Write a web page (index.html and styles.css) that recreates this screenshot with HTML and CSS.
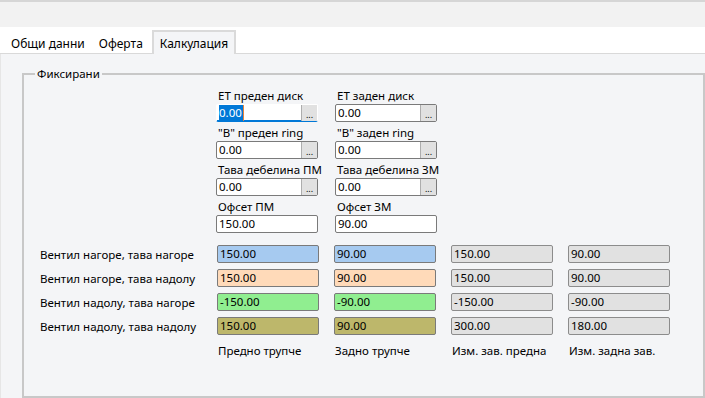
FILE: index.html
```html
<!DOCTYPE html>
<html lang="bg">
<head>
  <meta charset="UTF-8">
  <title>Калкулация</title>
  <link rel="stylesheet" href="styles.css">
</head>
<body>
  <div class="titlebar"></div>
  <div class="tabs">
    <span class="tab">Общи данни</span>
    <span class="tab">Оферта</span>
    <span class="tab active">Калкулация</span>
  </div>
  <div class="panel">
    <fieldset class="group">
      <legend>Фиксирани</legend>
      <div class="fixed">
        <div class="field">
          <label>ЕТ преден диск</label>
          <div class="edit focused"><span class="sel">0.00</span><span class="dots">...</span></div>
        </div>
        <div class="field">
          <label>ЕТ заден диск</label>
          <div class="edit"><span>0.00</span><span class="dots">...</span></div>
        </div>
        <div class="field">
          <label>"B" преден ring</label>
          <div class="edit"><span>0.00</span><span class="dots">...</span></div>
        </div>
        <div class="field">
          <label>"B" заден ring</label>
          <div class="edit"><span>0.00</span><span class="dots">...</span></div>
        </div>
        <div class="field">
          <label>Тава дебелина ПМ</label>
          <div class="edit"><span>0.00</span><span class="dots">...</span></div>
        </div>
        <div class="field">
          <label>Тава дебелина ЗМ</label>
          <div class="edit"><span>0.00</span><span class="dots">...</span></div>
        </div>
        <div class="field">
          <label>Офсет ПМ</label>
          <div class="edit"><span>150.00</span></div>
        </div>
        <div class="field">
          <label>Офсет ЗМ</label>
          <div class="edit"><span>90.00</span></div>
        </div>
      </div>

      <div class="matrix">
        <span class="row-label">Вентил нагоре, тава нагоре</span>
        <div class="edit blue">150.00</div>
        <div class="edit blue">90.00</div>
        <div class="edit ro">150.00</div>
        <div class="edit ro">90.00</div>

        <span class="row-label">Вентил нагоре, тава надолу</span>
        <div class="edit peach">150.00</div>
        <div class="edit peach">90.00</div>
        <div class="edit ro">150.00</div>
        <div class="edit ro">90.00</div>

        <span class="row-label">Вентил надолу, тава нагоре</span>
        <div class="edit green">-150.00</div>
        <div class="edit green">-90.00</div>
        <div class="edit ro">-150.00</div>
        <div class="edit ro">-90.00</div>

        <span class="row-label">Вентил надолу, тава надолу</span>
        <div class="edit khaki">150.00</div>
        <div class="edit khaki">90.00</div>
        <div class="edit ro">300.00</div>
        <div class="edit ro">180.00</div>

        <span></span>
        <span class="col-label">Предно трупче</span>
        <span class="col-label">Задно трупче</span>
        <span class="col-label">Изм. зав. предна</span>
        <span class="col-label">Изм. задна зав.</span>
      </div>
    </fieldset>
  </div>
</body>
</html>
```

FILE: styles.css
```css
* { box-sizing: border-box; }
html, body { height: 100%; }
body { margin: 0; font-family: "Noto Sans", "Open Sans", sans-serif; font-size: 12px; color: #000; background: #fff; display: flex; flex-direction: column; overflow: hidden; }

.titlebar { height: 27px; flex: none; background: #f2f2f2; border-top: 2px solid #d6d6d6; }

.tabs { height: 27px; flex: none; display: flex; align-items: flex-end; background: #fff; border-bottom: 1px solid #d9d9d9; padding-left: 4px; }
.tab { height: 21px; line-height: 17px; padding: 2px 7px 0; margin-bottom: -1px; }
.tab.active { height: 24px; line-height: 19px; padding: 2px 6px 0; margin-left: 2px; background: #f4f5f7; border: 2px solid #dadada; border-bottom: none; }

.panel { flex: 1; display: flex; background: #f4f5f7; border-left: 1px solid #e6e6e6; padding: 12px 0 0 21px; font-size: 11.5px; }

.group { flex: 1; margin: 0; padding: 0; border: 2px solid #c8c8c8; min-width: 0; }
.group legend { margin-left: 11px; padding: 0 2px; line-height: 15px; }

.fixed { display: grid; grid-template-columns: 102px 102px; column-gap: 17px; row-gap: 3px; padding-left: 192px; margin-top: 7px; }
.field label { display: block; line-height: 15px; margin-bottom: 1px; padding-left: 2px; white-space: nowrap; }

.edit { height: 18px; display: flex; align-items: center; padding-left: 2px; border: 1px solid #7a7a7a; border-radius: 2px; background: #fff; line-height: 16px; white-space: nowrap; }
.edit .dots { margin-left: auto; width: 16px; height: 16px; border-left: 1px solid #adadad; background: #e1e1e1; font-size: 9px; line-height: 19px; text-align: center; }
.edit.focused { border-color: #fff; border-bottom: 2px solid #0078d7; }
.edit .sel { background: #0078d7; color: #fff; padding-right: 1px; border-right: 1px solid #e8833a; }

.matrix { display: grid; grid-template-columns: 162px repeat(4, 102px); column-gap: 15px; row-gap: 6px; padding-left: 16px; margin-top: 12px; align-items: center; }
.row-label { white-space: nowrap; }
.col-label { white-space: nowrap; padding-left: 1px; margin-top: 2px; }

.blue { background: #a6caf0; }
.peach { background: #ffdab9; }
.green { background: #90ee90; }
.khaki { background: #bdb76b; }
.ro { background: #e1e1e1; border-color: #8c8c8c; }
```
